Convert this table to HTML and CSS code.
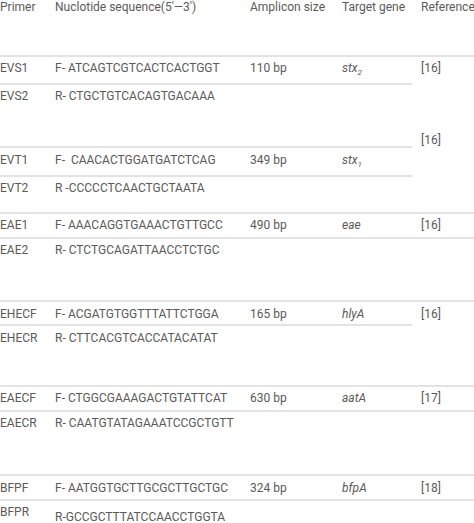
FILE: index.html
```html
<!DOCTYPE html>
<html>
<head>
<meta charset="utf-8">
<link rel="stylesheet" href="styles.css">
</head>
<body>
<div class="table">
  <div class="row head">
    <div>Primer</div><div>Nuclotide sequence(5′—3′)</div><div>Amplicon size</div><div>Target gene</div><div>Reference</div>
  </div>
  <div class="row full h28 p4">
    <div>EVS1</div><div>F- ATCAGTCGTCACTCACTGGT</div><div>110 bp</div><div><i>stx<sub>2</sub></i></div><div>[16]</div>
  </div>
  <div class="row part h28 p4">
    <div>EVS2</div><div>R- CTGCTGTCACAGTGACAAA</div>
  </div>
  <div class="row gap35">
    <div></div><div></div><div></div><div></div><div>[16]</div>
  </div>
  <div class="row part h29 p5">
    <div>EVT1</div><div>F-&nbsp; CAACACTGGATGATCTCAG</div><div>349 bp</div><div><i>stx<sub>1</sub></i></div>
  </div>
  <div class="row part h37 p4">
    <div>EVT2</div><div>R -CCCCCTCAACTGCTAATA</div>
  </div>
  <div class="row full h25 p4">
    <div>EAE1</div><div>F- AAACAGGTGAAACTGTTGCC</div><div>490 bp</div><div><i>eae</i></div><div>[16]</div>
  </div>
  <div class="row full h63 p4">
    <div>EAE2</div><div>R- CTCTGCAGATTAACCTCTGC</div>
  </div>
  <div class="row full h24 p5">
    <div>EHECF</div><div>F- ACGATGTGGTTTATTCTGGA</div><div>165 bp</div><div><i>hlyA</i></div><div>[16]</div>
  </div>
  <div class="row part h61 p5">
    <div>EHECR</div><div>R- CTTCACGTCACCATACATAT</div>
  </div>
  <div class="row full h25 p4">
    <div>EAECF</div><div>F- CTGGCGAAAGACTGTATTCAT</div><div>630 bp</div><div><i>aatA</i></div><div>[17]</div>
  </div>
  <div class="row full h64 p4">
    <div>EAECR</div><div>R- CAATGTATAGAAATCCGCTGTT</div>
  </div>
  <div class="row full h25 p5">
    <div>BFPF</div><div>F- AATGGTGCTTGCGCTTGCTGC</div><div>324 bp</div><div><i>bfpA</i></div><div>[18]</div>
  </div>
  <div class="row full h28 p4">
    <div>BFPR</div><div class="low">R-GCCGCTTTATCCAACCTGGTA</div>
  </div>
</div>
</body>
</html>
```
FILE: styles.css
```css
html, body {
  margin: 0;
  padding: 0;
  background: #ffffff;
  overflow: hidden;
}
body {
  width: 474px;
  height: 523px;
  font-family: Roboto, "Liberation Sans", sans-serif;
  font-size: 12px;
  line-height: 14px;
  color: #5a5a5a;
}
.table {
  display: flex;
  flex-direction: column;
}
.row {
  display: grid;
  grid-template-columns: 55px 195px 92px 79px 53px;
  align-items: start;
  box-sizing: border-box;
  white-space: nowrap;
}
.row > div {
  overflow: visible;
}
.head { height: 55px; }
.full { border-top: 2px solid #e3e3e3; width: 474px; }
.part { border-top: 2px solid #e3e3e3; width: 412px; }
.h24 { height: 24px; }
.h25 { height: 25px; }
.h28 { height: 28px; }
.h29 { height: 29px; }
.h37 { height: 37px; }
.h61 { height: 61px; }
.h63 { height: 63px; }
.h64 { height: 64px; }
.gap35 { height: 35px; padding-top: 22px; }
.p4 { padding-top: 4px; }
.p5 { padding-top: 5px; }
.low { padding-top: 5px; }
i { font-style: italic; }
sub {
  font-size: 8px;
  line-height: 0;
  vertical-align: -3px;
}
```
